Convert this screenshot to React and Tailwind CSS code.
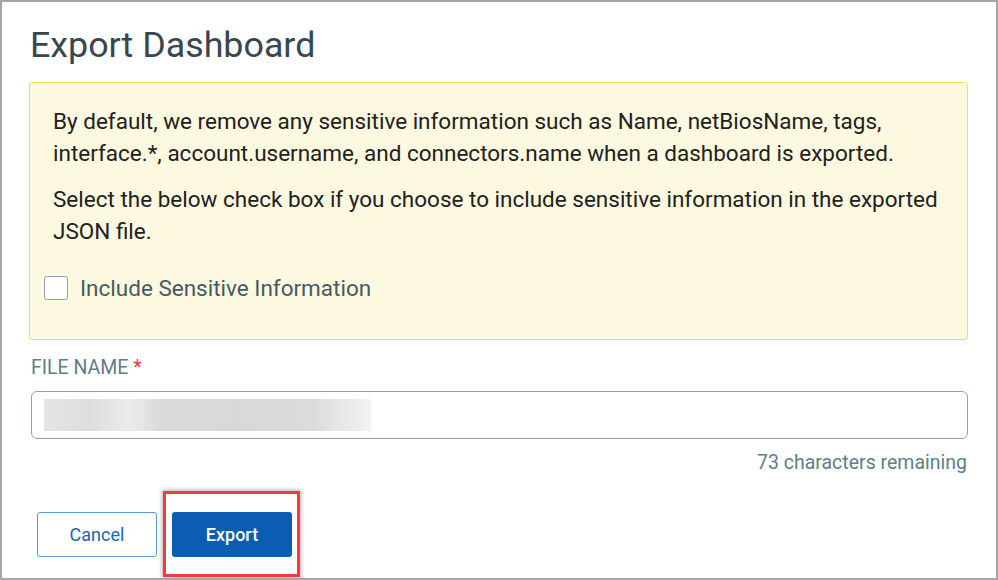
import React, { useState } from "react";

export default function App() {
  const [checked, setChecked] = useState(false);
  const [remaining] = useState(73);

  return (
    <div className="w-[998px] h-[580px] bg-white border-2 border-[#a6a6a6] overflow-hidden font-['Roboto','Liberation_Sans',sans-serif]">
      <div className="pl-[27px] pr-[28px]">
        <h1 className="mt-[21px] ml-[1px] text-[35.8px] leading-[44px] font-normal text-[#37474f]">Export Dashboard</h1>

        <div className="mt-[15px] rounded-[3px] border border-[#f1dc70] bg-[#fdf8e0] pl-[23px] pr-[20px] pt-[22px] pb-[39px]">
          <p className="text-[22.5px] leading-[32px] text-[#212121]">
            By default, we remove any sensitive information such as Name, netBiosName, tags, interface.*, account.username, and connectors.name when a dashboard is exported.
          </p>
          <p className="mt-[14px] text-[22.5px] leading-[32px] text-[#212121]">
            Select the below check box if you choose to include sensitive information in the exported JSON file.
          </p>
          <label className="mt-[29px] -ml-[9px] flex items-center gap-[12px] cursor-pointer">
            <button
              type="button"
              onClick={() => setChecked(!checked)}
              className="w-[24px] h-[24px] rounded-[3px] border border-[#90a4ae] bg-white"
            />
            <span className="text-[22.5px] leading-[24px] text-[#455a64]">Include Sensitive Information</span>
          </label>
        </div>

        <div className="mt-[16px] ml-[2px] text-[19.5px] leading-[24px] text-[#607d8b]">
          FILE NAME <span className="text-[#e53935]">*</span>
        </div>

        <div className="mt-[11px] ml-[2px] h-[48px] rounded-[6px] border border-[#8fa3ad] bg-white flex items-center pl-[12px]">
          <div className="w-[327px] h-[32px] bg-[linear-gradient(to_right,#e4e5e6_0%,#dcdddf_14%,#ebeced_26%,#d9dadc_36%,#d7d8da_60%,#dadbdd_82%,#f3f3f4_100%)]" />
        </div>

        <div className="mt-[12px] text-right text-[19.5px] leading-[24px] text-[#607d8b] pr-[1px]">
          {remaining} characters remaining
        </div>

        <div className="mt-[37px] ml-[8px] flex items-center gap-[15px]">
          <button className="w-[120px] h-[45px] rounded-[3px] border border-[#5d9ad6] bg-white text-[18px] text-[#1e63b5]">
            Cancel
          </button>
          <div className="relative">
            <button className="w-[120px] h-[45px] rounded-[3px] bg-[#0b5db2] text-[18px] font-medium text-white">
              Export
            </button>
            <div className="absolute left-[-9px] top-[-21px] w-[137px] h-[86px] border-[3px] border-[#f03c3c] shadow-[0_0_4px_1px_rgba(0,0,0,0.3)] pointer-events-none" />
          </div>
        </div>
      </div>
    </div>
  );
}
